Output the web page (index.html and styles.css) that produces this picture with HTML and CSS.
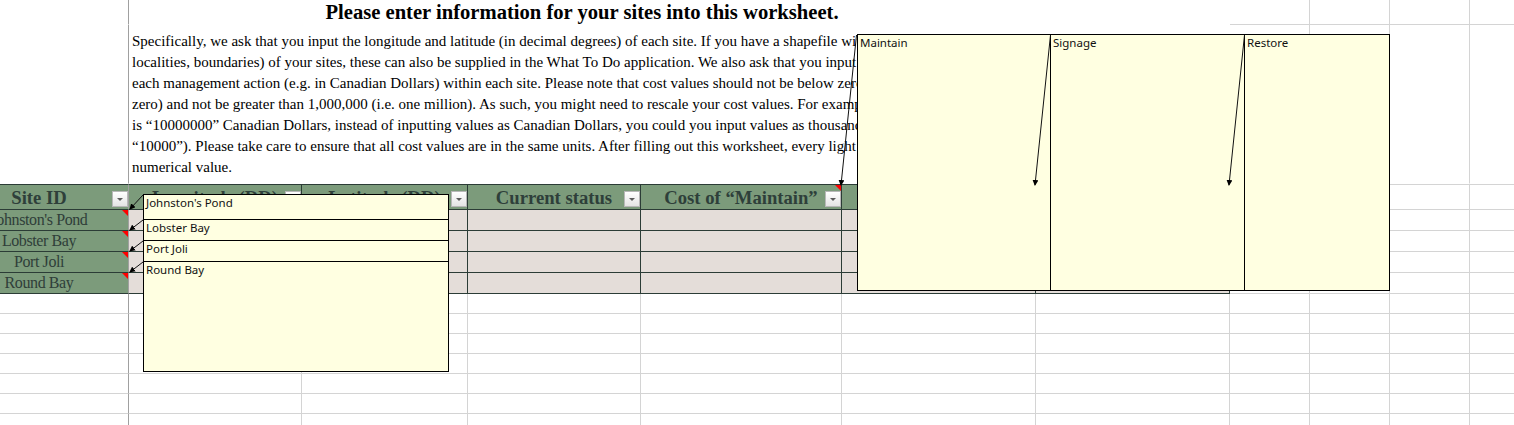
FILE: index.html
```html
<!DOCTYPE html>
<html>
<head>
<meta charset="utf-8">
<title>Sites worksheet</title>
<link rel="stylesheet" href="styles.css">
</head>
<body>
<div class="sheet">
  <div class="row r-title">
    <div class="c fz"></div>
    <div class="c none title">Please enter information for your sites into this worksheet.</div>
    <div class="c none"></div>
    <div class="c"></div><div class="c"></div><div class="c"></div><div class="c"></div>
  </div>
  <div class="row r-para">
    <div class="c fz"></div>
    <div class="c none para">
      <div class="ln">Specifically, we ask that you input the longitude and latitude (in decimal degrees) of each site. If you have a shapefile with the spatial data (e.g.</div>
      <div class="ln">localities, boundaries) of your sites, these can also be supplied in the What To Do application. We also ask that you input the cost of</div>
      <div class="ln">each management action (e.g. in Canadian Dollars) within each site. Please note that cost values should not be below zero (i.e. less than</div>
      <div class="ln">zero) and not be greater than 1,000,000 (i.e. one million). As such, you might need to rescale your cost values. For example, if a cost</div>
      <div class="ln">is “10000000” Canadian Dollars, instead of inputting values as Canadian Dollars, you could you input values as thousands of dollars (i.e.</div>
      <div class="ln">“10000”). Please take care to ensure that all cost values are in the same units. After filling out this worksheet, every light green cell</div>
      <div class="ln">numerical value.</div>
    </div>
    <div class="c nb"></div><div class="c nb"></div><div class="c nb"></div><div class="c nb"></div>
  </div>
  <div class="row r-head">
    <div class="c h hA">Site ID<span class="dd"></span></div>
    <div class="c h">Longitude (DD)<span class="dd"></span></div>
    <div class="c h">Latitude (DD)<span class="dd"></span></div>
    <div class="c h">Current status<span class="dd"></span></div>
    <div class="c h note">Cost of “Maintain”<span class="dd"></span></div>
    <div class="c h note">Cost of “Signage”<span class="dd"></span></div>
    <div class="c h note">Cost of “Restore”<span class="dd"></span></div>
    <div class="c hx"></div><div class="c hx"></div><div class="c hx"></div><div class="c hx"></div>
  </div>
  <div class="row r-data">
    <div class="c site note">Johnston's Pond</div>
    <div class="c d"></div><div class="c d"></div><div class="c d"></div><div class="c d"></div><div class="c d"></div><div class="c d"></div>
    <div class="c"></div><div class="c"></div><div class="c"></div><div class="c"></div>
  </div>
  <div class="row r-data">
    <div class="c site note">Lobster Bay</div>
    <div class="c d"></div><div class="c d"></div><div class="c d"></div><div class="c d"></div><div class="c d"></div><div class="c d"></div>
    <div class="c"></div><div class="c"></div><div class="c"></div><div class="c"></div>
  </div>
  <div class="row r-data">
    <div class="c site note">Port Joli</div>
    <div class="c d"></div><div class="c d"></div><div class="c d"></div><div class="c d"></div><div class="c d"></div><div class="c d"></div>
    <div class="c"></div><div class="c"></div><div class="c"></div><div class="c"></div>
  </div>
  <div class="row r-data">
    <div class="c site note">Round Bay</div>
    <div class="c d"></div><div class="c d"></div><div class="c d"></div><div class="c d"></div><div class="c d"></div><div class="c d"></div>
    <div class="c"></div><div class="c"></div><div class="c"></div><div class="c"></div>
  </div>
  <div class="row r-empty"><div class="c"></div><div class="c"></div><div class="c"></div><div class="c"></div><div class="c"></div><div class="c"></div><div class="c"></div><div class="c"></div><div class="c"></div><div class="c"></div><div class="c"></div></div>
  <div class="row r-empty"><div class="c"></div><div class="c"></div><div class="c"></div><div class="c"></div><div class="c"></div><div class="c"></div><div class="c"></div><div class="c"></div><div class="c"></div><div class="c"></div><div class="c"></div></div>
  <div class="row r-empty"><div class="c"></div><div class="c"></div><div class="c"></div><div class="c"></div><div class="c"></div><div class="c"></div><div class="c"></div><div class="c"></div><div class="c"></div><div class="c"></div><div class="c"></div></div>
  <div class="row r-empty"><div class="c"></div><div class="c"></div><div class="c"></div><div class="c"></div><div class="c"></div><div class="c"></div><div class="c"></div><div class="c"></div><div class="c"></div><div class="c"></div><div class="c"></div></div>
  <div class="row r-empty"><div class="c"></div><div class="c"></div><div class="c"></div><div class="c"></div><div class="c"></div><div class="c"></div><div class="c"></div><div class="c"></div><div class="c"></div><div class="c"></div><div class="c"></div></div>
  <div class="row r-empty"><div class="c"></div><div class="c"></div><div class="c"></div><div class="c"></div><div class="c"></div><div class="c"></div><div class="c"></div><div class="c"></div><div class="c"></div><div class="c"></div><div class="c"></div></div>
  <div class="row r-empty"><div class="c"></div><div class="c"></div><div class="c"></div><div class="c"></div><div class="c"></div><div class="c"></div><div class="c"></div><div class="c"></div><div class="c"></div><div class="c"></div><div class="c"></div></div>
</div>

<div class="cm cm-site cm-s1">Johnston's Pond</div>
<div class="cm cm-site cm-s2">Lobster Bay</div>
<div class="cm cm-site cm-s3">Port Joli</div>
<div class="cm cm-site cm-s4">Round Bay</div>

<div class="cm cm-big cm-maintain">Maintain</div>
<div class="cm cm-big cm-signage">Signage</div>
<div class="cm cm-big cm-restore">Restore</div>

<svg class="arrows" width="1514" height="425" viewBox="0 0 1514 425">
  <defs>
    <marker id="ah" markerWidth="6" markerHeight="6" refX="5" refY="3" orient="auto" markerUnits="userSpaceOnUse">
      <path d="M0,0 L6,3 L0,6 z" fill="#000"/>
    </marker>
  </defs>
  <g stroke="#111" stroke-width="1" fill="none" marker-end="url(#ah)">
    <line x1="143" y1="195" x2="130" y2="209"/>
    <line x1="143" y1="220" x2="130" y2="230"/>
    <line x1="143" y1="241" x2="130" y2="251"/>
    <line x1="143" y1="262" x2="130" y2="272"/>
    <line x1="856.5" y1="35" x2="841" y2="185"/>
    <line x1="1050.5" y1="35" x2="1035" y2="185"/>
    <line x1="1244.5" y1="35" x2="1229" y2="185"/>
  </g>
</svg>
</body>
</html>
```
FILE: styles.css
```css
* { box-sizing: border-box; }
html, body { margin: 0; padding: 0; }
body {
  width: 1514px;
  height: 425px;
  overflow: hidden;
  position: relative;
  background: #ffffff;
  font-family: "Liberation Serif", "Times New Roman", serif;
  color: #000;
}
.sheet { margin-left: -50px; width: 1600px; }
.row {
  display: grid;
  grid-template-columns: 179px 173px 166px 173px 201px 194px 194px 80px 80px 80px 80px;
}
.r-title { height: 25px; }
.r-para { height: 159px; }
.r-head { height: 26px; }
.r-data { height: 21px; }
.r-empty { height: 20px; }

.c {
  position: relative;
  border-right: 1px solid #d4d4d4;
  border-bottom: 1px solid #d4d4d4;
  min-width: 0;
}
.row > .c:first-child { border-right-color: #a0a0a0; }
.fz { border-bottom-color: transparent; }
.none { border-color: transparent; }
.nb { border-bottom-color: transparent; }

.title {
  grid-column: span 5;
  text-align: center;
  font-weight: bold;
  font-size: 20.6px;
  line-height: 24px;
  white-space: nowrap;
}
.para {
  grid-column: span 6;
  padding: 6px 3px 0 3px;
  font-size: 15px;
  line-height: 21px;
  overflow: hidden;
}
.ln { white-space: nowrap; }

.h {
  background: #7c9b7b;
  border-top: 1px solid #2b3c36;
  border-right-color: #2b3c36;
  border-bottom-color: #2b3c36;
  color: #2e3f3a;
  font-weight: bold;
  font-size: 18.67px;
  line-height: 25px;
  text-align: center;
  white-space: nowrap;
  overflow: hidden;
}
.row > .hA { border-right-color: #a0a0a0; }
.hx { border-top: 1px solid #d4d4d4; }

.dd {
  position: absolute;
  right: 0;
  bottom: 2px;
  width: 16px;
  height: 16px;
  border: 1px solid #b8b8b8;
  background: linear-gradient(#ffffff, #e4e4e4);
}
.dd::after {
  content: "";
  position: absolute;
  left: 4px;
  top: 6px;
  border-left: 3px solid transparent;
  border-right: 3px solid transparent;
  border-top: 3px solid #5c5c5c;
}

.site {
  background: #7c9b7b;
  border-bottom-color: #2b3c36;
  color: #2f3e39;
  font-size: 16px;
  letter-spacing: -0.4px;
  line-height: 20px;
  text-align: center;
  white-space: nowrap;
}
.d {
  background: #e4ddd9;
  border-right-color: #2b3c36;
  border-bottom-color: #2b3c36;
}

.note::before {
  content: "";
  position: absolute;
  top: 0;
  right: 0;
  border-top: 6px solid #ff0000;
  border-left: 6px solid transparent;
  z-index: 2;
}

.cm {
  position: absolute;
  background: #ffffe1;
  border: 1px solid #000;
  font-family: "Noto Sans", "DejaVu Sans", sans-serif;
  font-size: 11.5px;
  line-height: 14px;
  padding: 1px 2px 0 2px;
  color: #111;
  white-space: nowrap;
  z-index: 5;
}
.cm-site { left: 143px; width: 306px; height: 111px; }
.cm-s1 { top: 194px; }
.cm-s2 { top: 219px; }
.cm-s3 { top: 240px; }
.cm-s4 { top: 261px; }

.cm-big { top: 34px; height: 257px; }
.cm-maintain { left: 857px; width: 260px; }
.cm-signage { left: 1050px; width: 260px; }
.cm-restore { left: 1244px; width: 146px; }

.arrows {
  position: absolute;
  left: 0;
  top: 0;
  z-index: 10;
  pointer-events: none;
}
```
